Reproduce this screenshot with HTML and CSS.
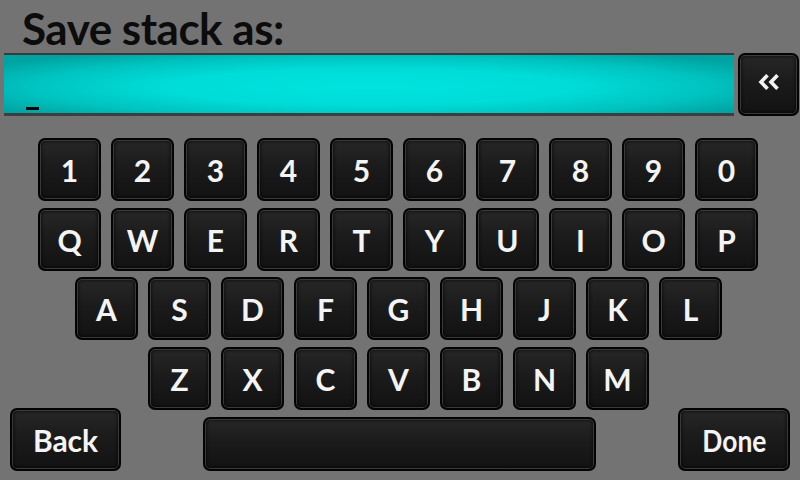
FILE: index.html
```html
<!DOCTYPE html>
<html>
<head>
<meta charset="utf-8">
<link rel="stylesheet" href="styles.css">
</head>
<body>
<div class="screen">
  <h1 class="title">Save stack as:</h1>
  <div class="entry-row">
    <div class="field"><span class="cursor"></span></div>
    <div class="key key-bksp">
      <svg class="bksp-icon" width="22" height="16" viewBox="0 0 22 16">
        <polyline points="9.5,1.2 3,8 9.5,14.8" fill="none" stroke="#f2f2f2" stroke-width="3.6" stroke-linejoin="miter" stroke-miterlimit="6"/>
        <polyline points="19.5,1.2 13,8 19.5,14.8" fill="none" stroke="#f2f2f2" stroke-width="3.6" stroke-linejoin="miter" stroke-miterlimit="6"/>
      </svg>
    </div>
  </div>
  <div class="keys">
    <div class="row row-1">
      <div class="key">1</div><div class="key">2</div><div class="key">3</div><div class="key">4</div><div class="key">5</div><div class="key">6</div><div class="key">7</div><div class="key">8</div><div class="key">9</div><div class="key">0</div>
    </div>
    <div class="row row-2">
      <div class="key">Q</div><div class="key">W</div><div class="key">E</div><div class="key">R</div><div class="key">T</div><div class="key">Y</div><div class="key">U</div><div class="key">I</div><div class="key">O</div><div class="key">P</div>
    </div>
    <div class="row row-3">
      <div class="key">A</div><div class="key">S</div><div class="key">D</div><div class="key">F</div><div class="key">G</div><div class="key">H</div><div class="key">J</div><div class="key">K</div><div class="key">L</div>
    </div>
    <div class="row row-4">
      <div class="key">Z</div><div class="key">X</div><div class="key">C</div><div class="key">V</div><div class="key">B</div><div class="key">N</div><div class="key">M</div>
    </div>
  </div>
  <div class="bottom-row">
    <div class="key key-back">Back</div>
    <div class="key key-space"></div>
    <div class="key key-done"><span class="narrow">Done</span></div>
  </div>
</div>
</body>
</html>
```
FILE: styles.css
```css
html, body {
  margin: 0;
  padding: 0;
  background: #747373;
}
.screen {
  width: 800px;
  height: 480px;
  overflow: hidden;
  display: flex;
  flex-direction: column;
  background: #747373;
  font-family: Lato, "DejaVu Sans", sans-serif;
}
.title {
  box-sizing: border-box;
  height: 53px;
  margin: 0;
  padding: 6px 0 0 22px;
  font-size: 44px;
  line-height: 44px;
  font-weight: bold;
  color: #0c0c0c;
  letter-spacing: -0.5px;
}
.entry-row {
  display: flex;
  height: 63px;
}
.field {
  box-sizing: border-box;
  width: 730px;
  height: 63px;
  margin-left: 4px;
  border-top: 2px solid #3a3a3a;
  border-bottom: 3px solid #3e3e3e;
  background:
    radial-gradient(ellipse 62% 70% at 50% 55%, #00e3de 0%, #00dcd8 45%, #00c3c0 75%, #00a3a1 100%);
  display: flex;
  align-items: flex-end;
  padding: 0 0 3px 22px;
}
.cursor {
  display: block;
  width: 13px;
  height: 3px;
  background: #050505;
}
.key {
  box-sizing: border-box;
  width: 63px;
  height: 63px;
  border: 2px solid #030303;
  border-radius: 7px;
  background: linear-gradient(#272727, #1b1b1b 45%, #121212);
  box-shadow: inset 0 0 0 1px #3a3a3a, inset 0 0 3px 2px rgba(0,0,0,0.5);
  color: #f4f4f4;
  font-size: 30px;
  font-weight: bold;
  line-height: 1;
  display: flex;
  align-items: center;
  justify-content: center;
  flex: none;
}
.key-bksp {
  width: 61px;
  margin-left: 4px;
}
.bksp-icon {
  margin: 0 0 6px 1px;
}
.keys {
  display: flex;
  flex-direction: column;
  margin-top: 22px;
}
.row {
  display: flex;
  gap: 10px;
}
.row-1 { padding-left: 38px; }
.row-2 { padding-left: 38px; margin-top: 7px; }
.row-3 { padding-left: 75px; margin-top: 6px; }
.row-4 { padding-left: 148px; margin-top: 7px; }
.bottom-row {
  display: flex;
  align-items: flex-end;
  margin-top: -2px;
}
.key-back {
  width: 111px;
  margin-left: 10px;
}
.key-space {
  width: 393px;
  height: 54px;
  margin-left: 82px;
}
.key-done {
  width: 112px;
  margin-left: 82px;
}
.narrow {
  display: inline-block;
  transform: scaleX(0.88);
}
```
